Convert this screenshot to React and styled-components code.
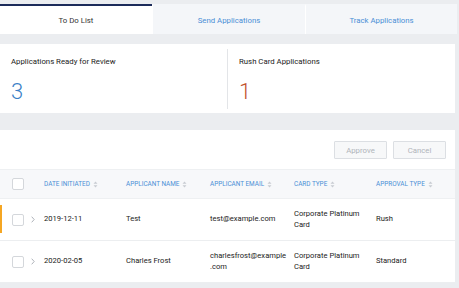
import React from 'react';
import styled, { createGlobalStyle } from 'styled-components';

const GlobalStyle = createGlobalStyle`
  html, body {
    margin: 0;
    padding: 0;
    background: #ebedf0;
    font-family: Roboto, "Liberation Sans", sans-serif;
  }
`;

const tabs = [
  { label: 'To Do List', active: true },
  { label: 'Send Applications' },
  { label: 'Track Applications' },
];

const columns = ['Date Initiated', 'Applicant Name', 'Applicant Email', 'Card Type', 'Approval Type'];

const rows = [
  { date: '2019-12-11', name: 'Test', email: 'test@example.com', card: 'Corporate Platinum Card', type: 'Rush', flagged: true },
  { date: '2020-02-05', name: 'Charles Frost', email: 'charlesfrost@example.com', card: 'Corporate Platinum Card', type: 'Standard' },
];

// lets long addresses wrap before the domain suffix
function Email({ value }) {
  const i = value.lastIndexOf('.');
  return <>{value.slice(0, i)}<wbr />{value.slice(i)}</>;
}

function SortIcon() {
  return (
    <svg width="5" height="7" viewBox="0 0 5 7">
      <path d="M2.5 0.5 L4.5 2.8 H0.5 Z M2.5 6.5 L4.5 4.2 H0.5 Z" fill="#c8ccd2" />
    </svg>
  );
}

function Chevron() {
  return (
    <svg width="4" height="7" viewBox="0 0 4 7">
      <path d="M0.7 0.7 L3.2 3.5 L0.7 6.3" fill="none" stroke="#9aa0a8" strokeWidth="0.8" />
    </svg>
  );
}

function App() {
  return (
    <Page>
      <GlobalStyle />
      <TabBar>
        {tabs.map((t) => (
          <Tab key={t.label} $active={t.active}>{t.label}</Tab>
        ))}
      </TabBar>

      <SummaryCard>
        <Stat>
          <StatLabel>Applications Ready for Review</StatLabel>
          <StatValue $color="#3b7fc6">3</StatValue>
        </Stat>
        <StatDivider />
        <Stat>
          <StatLabel>Rush Card Applications</StatLabel>
          <StatValue $color="#c2532f">1</StatValue>
        </Stat>
      </SummaryCard>

      <TableCard>
        <Actions>
          <ActionButton disabled>Approve</ActionButton>
          <ActionButton disabled>Cancel</ActionButton>
        </Actions>
        <Table>
          <HeadRow>
            <CheckCell><Checkbox /></CheckCell>
            {columns.map((c) => (
              <HeadCell key={c}>{c} <SortIcon /></HeadCell>
            ))}
          </HeadRow>
          {rows.map((r) => (
            <BodyRow key={r.date} $flagged={r.flagged}>
              <CheckCell>
                <Checkbox />
                <Chevron />
              </CheckCell>
              <Cell>{r.date}</Cell>
              <Cell>{r.name}</Cell>
              <Cell><Email value={r.email} /></Cell>
              <Cell>{r.card}</Cell>
              <Cell>{r.type}</Cell>
            </BodyRow>
          ))}
        </Table>
      </TableCard>
    </Page>
  );
}

const Page = styled.div`
  width: 459px;
  height: 288px;
  overflow: hidden;
  padding-top: 4px;
  box-sizing: border-box;
`;

const TabBar = styled.div`
  display: grid;
  grid-template-columns: 152px 153px 1fr;
  height: 30px;
  margin-right: 2px;
  background: #f4f6f9;
`;

const Tab = styled.div`
  display: flex;
  align-items: center;
  justify-content: center;
  font-size: 7.8px;
  color: ${(p) => (p.$active ? '#333' : '#4a8fd6')};
  background: ${(p) => (p.$active ? '#fff' : '#f4f6f9')};
  border-top: 2px solid ${(p) => (p.$active ? '#1c2b5a' : 'transparent')};
  box-sizing: border-box;
  & + & {
    border-left: 1px solid #fff;
  }
`;

const SummaryCard = styled.div`
  display: flex;
  margin: 10px 4px 0 0;
  height: 69px;
  background: #fff;
`;

const Stat = styled.div`
  flex: 1;
  padding: 13px 11px 0;
`;

const StatDivider = styled.div`
  width: 1px;
  margin: 5px 0 4px;
  background: #e3e5e8;
`;

const StatLabel = styled.div`
  font-size: 7.8px;
  color: #222;
`;

const StatValue = styled.div`
  margin-top: 16px;
  font-size: 22px;
  font-weight: 300;
  line-height: 20px;
  color: ${(p) => p.$color};
`;

const TableCard = styled.div`
  margin: 17px 4px 0 0;
  background: #fff;
`;

const Actions = styled.div`
  display: flex;
  justify-content: flex-end;
  gap: 6px;
  padding: 11px 9px 10px 0;
`;

const ActionButton = styled.button`
  width: 53px;
  height: 18px;
  padding: 0;
  font-family: inherit;
  font-size: 7.8px;
  color: #b0b4ba;
  background: #f7f8f9;
  border: 1px solid #dcdfe3;
  border-radius: 1px;
`;

const Table = styled.div`
  display: flex;
  flex-direction: column;
`;

const gridCols = '44px 82px 84px 84px 82px 1fr';

const HeadRow = styled.div`
  display: grid;
  grid-template-columns: ${gridCols};
  align-items: center;
  height: 28px;
  background: #f7f8fa;
  border-top: 1px solid #eef0f2;
  border-bottom: 1px solid #eef0f2;
`;

const BodyRow = styled.div`
  display: grid;
  grid-template-columns: ${gridCols};
  align-items: center;
  height: 41px;
  border-bottom: 1px solid #eceef0;
  position: relative;
  &::before {
    content: '';
    display: ${(p) => (p.$flagged ? 'block' : 'none')};
    position: absolute;
    left: 0;
    top: 6px;
    bottom: 7px;
    width: 2px;
    background: #f5a623;
  }
`;

const CheckCell = styled.div`
  display: flex;
  align-items: center;
  gap: 7px;
  padding-left: 12px;
`;

const Checkbox = styled.span`
  display: block;
  width: 10px;
  height: 10px;
  border: 1px solid #d4d7db;
  border-radius: 2px;
  background: #fff;
`;

const HeadCell = styled.div`
  display: flex;
  align-items: center;
  gap: 3px;
  font-size: 6.4px;
  text-transform: uppercase;
  color: #4a8fd6;
`;

const Cell = styled.div`
  font-size: 7.6px;
  line-height: 10.5px;
  color: #222;
  padding-right: 6px;
  overflow-wrap: anywhere;
`;

export default App;
